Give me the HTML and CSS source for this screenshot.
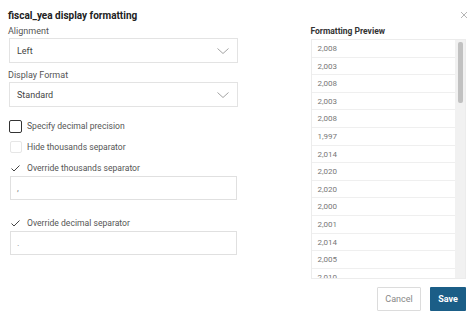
FILE: index.html
```html
<!DOCTYPE html>
<html lang="en">
<head>
	<meta charset="UTF-8">
	<title>fiscal_yea display formatting</title>
	<link rel="stylesheet" href="styles.css">
</head>
<body>
	<div class="dialog">
		<div class="head">
			<h3 class="title">fiscal_yea display formatting</h3>
			<svg class="close" width="8" height="8" viewBox="0 0 8 8">
				<path d="M1 1L7 7M7 1L1 7" stroke="#b5b5b5" stroke-width="1" fill="none"/>
			</svg>
		</div>

		<div class="cols">
			<div class="left">
				<div class="label">Alignment</div>
				<div class="select">
					<span>Left</span>
					<svg width="12" height="6" viewBox="0 0 12 6"><path d="M0.5 0.5L6 5.5L11.5 0.5" stroke="#a3a3a3" stroke-width="1" fill="none"/></svg>
				</div>

				<div class="label second">Display Format</div>
				<div class="select">
					<span>Standard</span>
					<svg width="12" height="6" viewBox="0 0 12 6"><path d="M0.5 0.5L6 5.5L11.5 0.5" stroke="#a3a3a3" stroke-width="1" fill="none"/></svg>
				</div>

				<div class="check first">
					<span class="box focus"></span>
					<span class="text">Specify decimal precision</span>
				</div>
				<div class="check">
					<span class="box"></span>
					<span class="text">Hide thousands separator</span>
				</div>
				<div class="check">
					<span class="tick">
						<svg width="11" height="9" viewBox="0 0 11 9"><path d="M1.5 4.5L4 7L9.5 1.5" stroke="#444" stroke-width="1" fill="none"/></svg>
					</span>
					<span class="text">Override thousands separator</span>
				</div>
				<div class="field">,</div>

				<div class="check gap">
					<span class="tick">
						<svg width="11" height="9" viewBox="0 0 11 9"><path d="M1.5 4.5L4 7L9.5 1.5" stroke="#444" stroke-width="1" fill="none"/></svg>
					</span>
					<span class="text">Override decimal separator</span>
				</div>
				<div class="field">.</div>
			</div>

			<div class="right">
				<div class="label bold">Formatting Preview</div>
				<div class="preview">
					<ul class="rows" id="rows"></ul>
					<div class="track"><div class="thumb"></div></div>
				</div>
			</div>
		</div>

		<div class="foot">
			<button class="btn cancel">Cancel</button>
			<button class="btn save">Save</button>
		</div>
	</div>

	<script>
		var years = ["2,008","2,003","2,008","2,003","2,008","1,997","2,014","2,020","2,020","2,000","2,001","2,014","2,005","2,010"],
			rows = document.getElementById("rows");

		//预览列表
		for (var i = 0; i < years.length; i++) {
			var li = document.createElement("li");
			li.innerText = years[i];
			rows.appendChild(li);
		}
	</script>
</body>
</html>
```

FILE: styles.css
```css
* {
	margin: 0;
	padding: 0;
	box-sizing: border-box;
}
body {
	font-family: Roboto, "Liberation Sans", sans-serif;
	background: #fff;
	color: #444;
}
.dialog {
	width: 474px;
	height: 321px;
	padding: 10px 8px 0 8px;
}
.head {
	display: flex;
	justify-content: space-between;
	align-items: center;
	height: 12px;
}
.title {
	font-size: 10px;
	font-weight: bold;
	color: #222;
	line-height: 12px;
}
.close {
	margin-right: -2px;
	margin-top: -3px;
}
.cols {
	display: flex;
	margin-top: 3px;
}
.left {
	width: 231px;
	padding-left: 1px;
}
.right {
	width: 155px;
	margin-left: 73px;
}
.label {
	font-size: 9px;
	line-height: 12px;
	color: #555;
	margin-left: -1px;
}
.label.second {
	margin-top: 6px;
}
.label.bold {
	font-weight: bold;
	color: #333;
	font-size: 8.5px;
}
.select {
	display: flex;
	justify-content: space-between;
	align-items: center;
	height: 25px;
	margin-top: 1px;
	padding: 0 8px 0 7px;
	border: 1px solid #e3e3e3;
	font-size: 9px;
	color: #444;
}
.check {
	display: flex;
	align-items: center;
	height: 14px;
	margin-top: 7px;
	font-size: 8.6px;
	color: #555;
}
.check.first {
	margin-top: 12px;
}
.check.gap {
	margin-top: 16px;
}
.box {
	display: inline-block;
	width: 12px;
	height: 12px;
	margin: 0 5px 0 1px;
	border: 1px solid #e6e6e6;
	border-radius: 2px;
}
.box.focus {
	width: 13px;
	height: 13px;
	margin-left: 0;
	margin-right: 5px;
	border: 1.5px solid #333;
}
.tick {
	display: inline-block;
	width: 12px;
	height: 12px;
	margin: 0 5px 0 1px;
	padding-top: 2px;
}
.field {
	height: 24px;
	margin-top: 1px;
	margin-left: 1px;
	margin-right: 1px;
	border: 1px solid #e0e0e0;
	padding-left: 6px;
	font-size: 9px;
	line-height: 22px;
	color: #888;
}
.preview {
	display: flex;
	height: 240px;
	margin-top: 2px;
	border: 1px solid #ececec;
	overflow: hidden;
}
.rows {
	flex: 1;
	list-style: none;
}
.rows li {
	height: 17.6px;
	line-height: 18px;
	padding-left: 5px;
	border-bottom: 1px solid #efefef;
	font-size: 8px;
	color: #777;
}
.track {
	width: 10px;
	background: #f1f1f1;
	padding: 2px 2px 0 3px;
}
.thumb {
	height: 61px;
	background: #c1c1c1;
	border-radius: 2px;
}
.foot {
	display: flex;
	justify-content: flex-end;
	margin-top: 8px;
	margin-right: 0;
}
.btn {
	height: 24px;
	font-family: Roboto, "Liberation Sans", sans-serif;
	font-size: 9px;
	border-radius: 1px;
}
.cancel {
	width: 44px;
	border: 1px solid #dcdcdc;
	background: #fff;
	color: #888;
}
.save {
	width: 36px;
	margin-left: 9px;
	border: none;
	background: #1b5e87;
	color: #fff;
	font-weight: bold;
}
```
